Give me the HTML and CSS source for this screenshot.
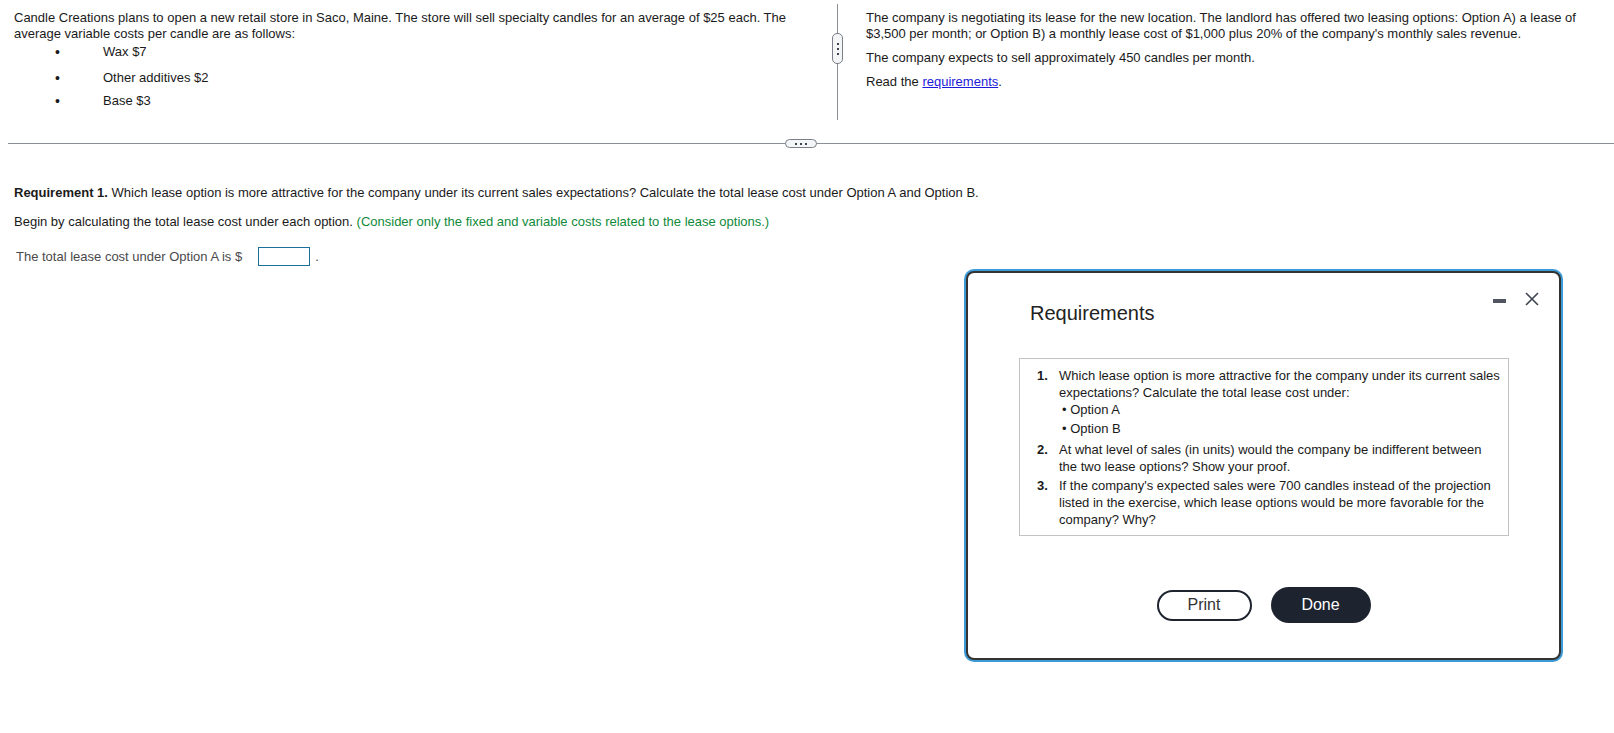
FILE: index.html
```html
<!DOCTYPE html>
<html lang="en">

<head>
    <meta charset="UTF-8">
    <meta name="viewport" content="width=device-width, initial-scale=1.0">
    <title>Candle Creations - Requirement 1</title>
    <link rel="stylesheet" href="styles.css">
</head>

<body>
    <div class="top">
        <div class="pane left-pane">
            <p class="intro">Candle Creations plans to open a new retail store in Saco, Maine. The store will sell specialty candles for an average of $25 each. The average variable costs per candle are as follows:</p>
            <ul class="costs">
                <li><span class="dot">&bull;</span>Wax $7</li>
                <li><span class="dot">&bull;</span>Other additives $2</li>
                <li><span class="dot">&bull;</span>Base $3</li>
            </ul>
        </div>
        <div class="vsplit">
            <div class="vhandle"><span></span><span></span><span></span></div>
        </div>
        <div class="pane right-pane">
            <p>The company is negotiating its lease for the new location. The landlord has offered two leasing options: Option A) a lease of $3,500 per month; or Option B) a monthly lease cost of $1,000 plus 20% of the company's monthly sales revenue.</p>
            <p>The company expects to sell approximately 450 candles per month.</p>
            <p>Read the <a href="#">requirements</a>.</p>
        </div>
    </div>

    <div class="hsplit">
        <div class="hhandle"><span></span><span></span><span></span></div>
    </div>

    <div class="question">
        <p><b>Requirement 1.</b> Which lease option is more attractive for the company under its current sales expectations? Calculate the total lease cost under Option A and Option B.</p>
        <p>Begin by calculating the total lease cost under each option. <span class="hint">(Consider only the fixed and variable costs related to the lease options.)</span></p>
        <div class="answer">The total lease cost under Option A is $ <input type="text" class="amount"> .</div>
    </div>

    <div class="modal">
        <div class="modal-head">
            <h2>Requirements</h2>
            <div class="win-btns">
                <span class="minimize"></span>
                <svg class="close" width="14" height="14" viewBox="0 0 14 14">
                    <path d="M1 1 L13 13 M13 1 L1 13" stroke="#3d4450" stroke-width="1.6" fill="none"/>
                </svg>
            </div>
        </div>
        <div class="req-box">
            <ol class="req-list">
                <li><b>1.</b>
                    <div>Which lease option is more attractive for the company under its current sales expectations? Calculate the total lease cost under:
                        <div class="sub">&bull; Option A</div>
                        <div class="sub">&bull; Option B</div>
                    </div>
                </li>
                <li><b>2.</b>
                    <div>At what level of sales (in units) would the company be indifferent between the two lease options? Show your proof.</div>
                </li>
                <li><b>3.</b>
                    <div>If the company's expected sales were 700 candles instead of the projection listed in the exercise, which lease options would be more favorable for the company? Why?</div>
                </li>
            </ol>
        </div>
        <div class="modal-foot">
            <button class="btn-print">Print</button>
            <button class="btn-done">Done</button>
        </div>
    </div>
</body>

</html>
```

FILE: styles.css
```css
body {
    margin: 0;
    font-family: 'Liberation Sans', Arial, Helvetica, sans-serif;
    font-size: 13px;
    line-height: 16px;
    color: #1a1a1a;
    background-color: #fff;
}

p {
    margin: 0;
}

/* top two panes */
.top {
    display: flex;
    height: 116px;
    padding-top: 4px;
}

.left-pane {
    width: 799px;
    padding: 6px 24px 0 14px;
}

.right-pane {
    flex: 1;
    padding: 6px 30px 0 28px;
}

.right-pane p {
    margin-bottom: 8px;
}

.costs {
    list-style: none;
    margin: 0;
    padding: 0;
}

.costs li {
    display: flex;
    height: 23px;
    align-items: center;
}

.costs li:first-child {
    height: 20px;
}

.costs li:nth-child(2) {
    margin-top: 4px;
}

.dot {
    width: 89px;
    padding-left: 41px;
    box-sizing: border-box;
    font-size: 14px;
}

a {
    color: #1b1bd8;
}

/* splitters */
.vsplit {
    width: 1px;
    background-color: #8a8f96;
    position: relative;
}

.vhandle {
    position: absolute;
    left: -5px;
    top: 29px;
    width: 9px;
    height: 29px;
    border: 1px solid #7a8089;
    border-radius: 5px;
    background-color: #f4f5f7;
    display: flex;
    flex-direction: column;
    align-items: center;
    justify-content: center;
    gap: 3px;
}

.vhandle span,
.hhandle span {
    width: 2px;
    height: 2px;
    background-color: #3d4450;
}

.hsplit {
    margin: 23px 0 0 8px;
    height: 1px;
    background-color: #8a8f96;
    position: relative;
}

.hhandle {
    position: absolute;
    left: 777px;
    top: -4px;
    width: 30px;
    height: 7px;
    border: 1px solid #7a8089;
    border-radius: 5px;
    background-color: #f4f5f7;
    display: flex;
    align-items: center;
    justify-content: center;
    gap: 3px;
}

/* question area */
.question {
    padding: 41px 0 0 14px;
}

.question p {
    margin-bottom: 13px;
}

.hint {
    color: #0f8a3a;
}

.answer {
    color: #4a4a4a;
    padding-left: 2px;
    display: flex;
    align-items: center;
    gap: 5px;
    margin-top: 17px;
}

.amount {
    width: 48px;
    height: 15px;
    border: 1px solid #1c6f96;
    margin-left: 11px;
    padding: 1px;
}

/* requirements window */
.modal {
    position: absolute;
    left: 966px;
    top: 271px;
    width: 591px;
    height: 385px;
    border: 2px solid #333;
    border-radius: 8px;
    box-shadow: 0 0 0 2px #3c9ad6;
    background-color: #fff;
}

.modal-head {
    display: flex;
    justify-content: space-between;
    align-items: flex-start;
    padding: 19px 20px 0 62px;
}

.modal-head h2 {
    margin: 9px 0 0;
    font-size: 20px;
    font-weight: normal;
    line-height: 24px;
    color: #222;
}

.win-btns {
    display: flex;
    align-items: center;
    gap: 19px;
    height: 14px;
}

.minimize {
    width: 13px;
    height: 4px;
    background-color: #505560;
    margin-top: 4px;
}

.req-box {
    margin: 33px 50px 0 51px;
    border: 1px solid #c3c3c3;
    padding: 8px 7px 7px 17px;
}

.req-list {
    list-style: none;
    margin: 0;
    padding: 0;
    font-size: 13px;
    line-height: 17px;
}

.req-list li {
    display: flex;
    margin-bottom: 2px;
}

.req-list li:last-child {
    margin-bottom: 0;
}

.req-list li b {
    width: 22px;
    flex-shrink: 0;
}

.sub {
    padding: 0 0 2px 3px;
}

.modal-foot {
    display: flex;
    justify-content: center;
    align-items: center;
    gap: 19px;
    margin-top: 51px;
}

.modal-foot button {
    font-family: 'Liberation Sans', Arial, Helvetica, sans-serif;
    font-size: 16px;
    border-radius: 18px;
    cursor: pointer;
}

.btn-print {
    width: 95px;
    height: 31px;
    border: 2px solid #1e2330;
    background-color: #fff;
    color: #333;
}

.btn-done {
    width: 100px;
    height: 36px;
    border: none;
    background-color: #1e2330;
    color: #fff;
}
```
